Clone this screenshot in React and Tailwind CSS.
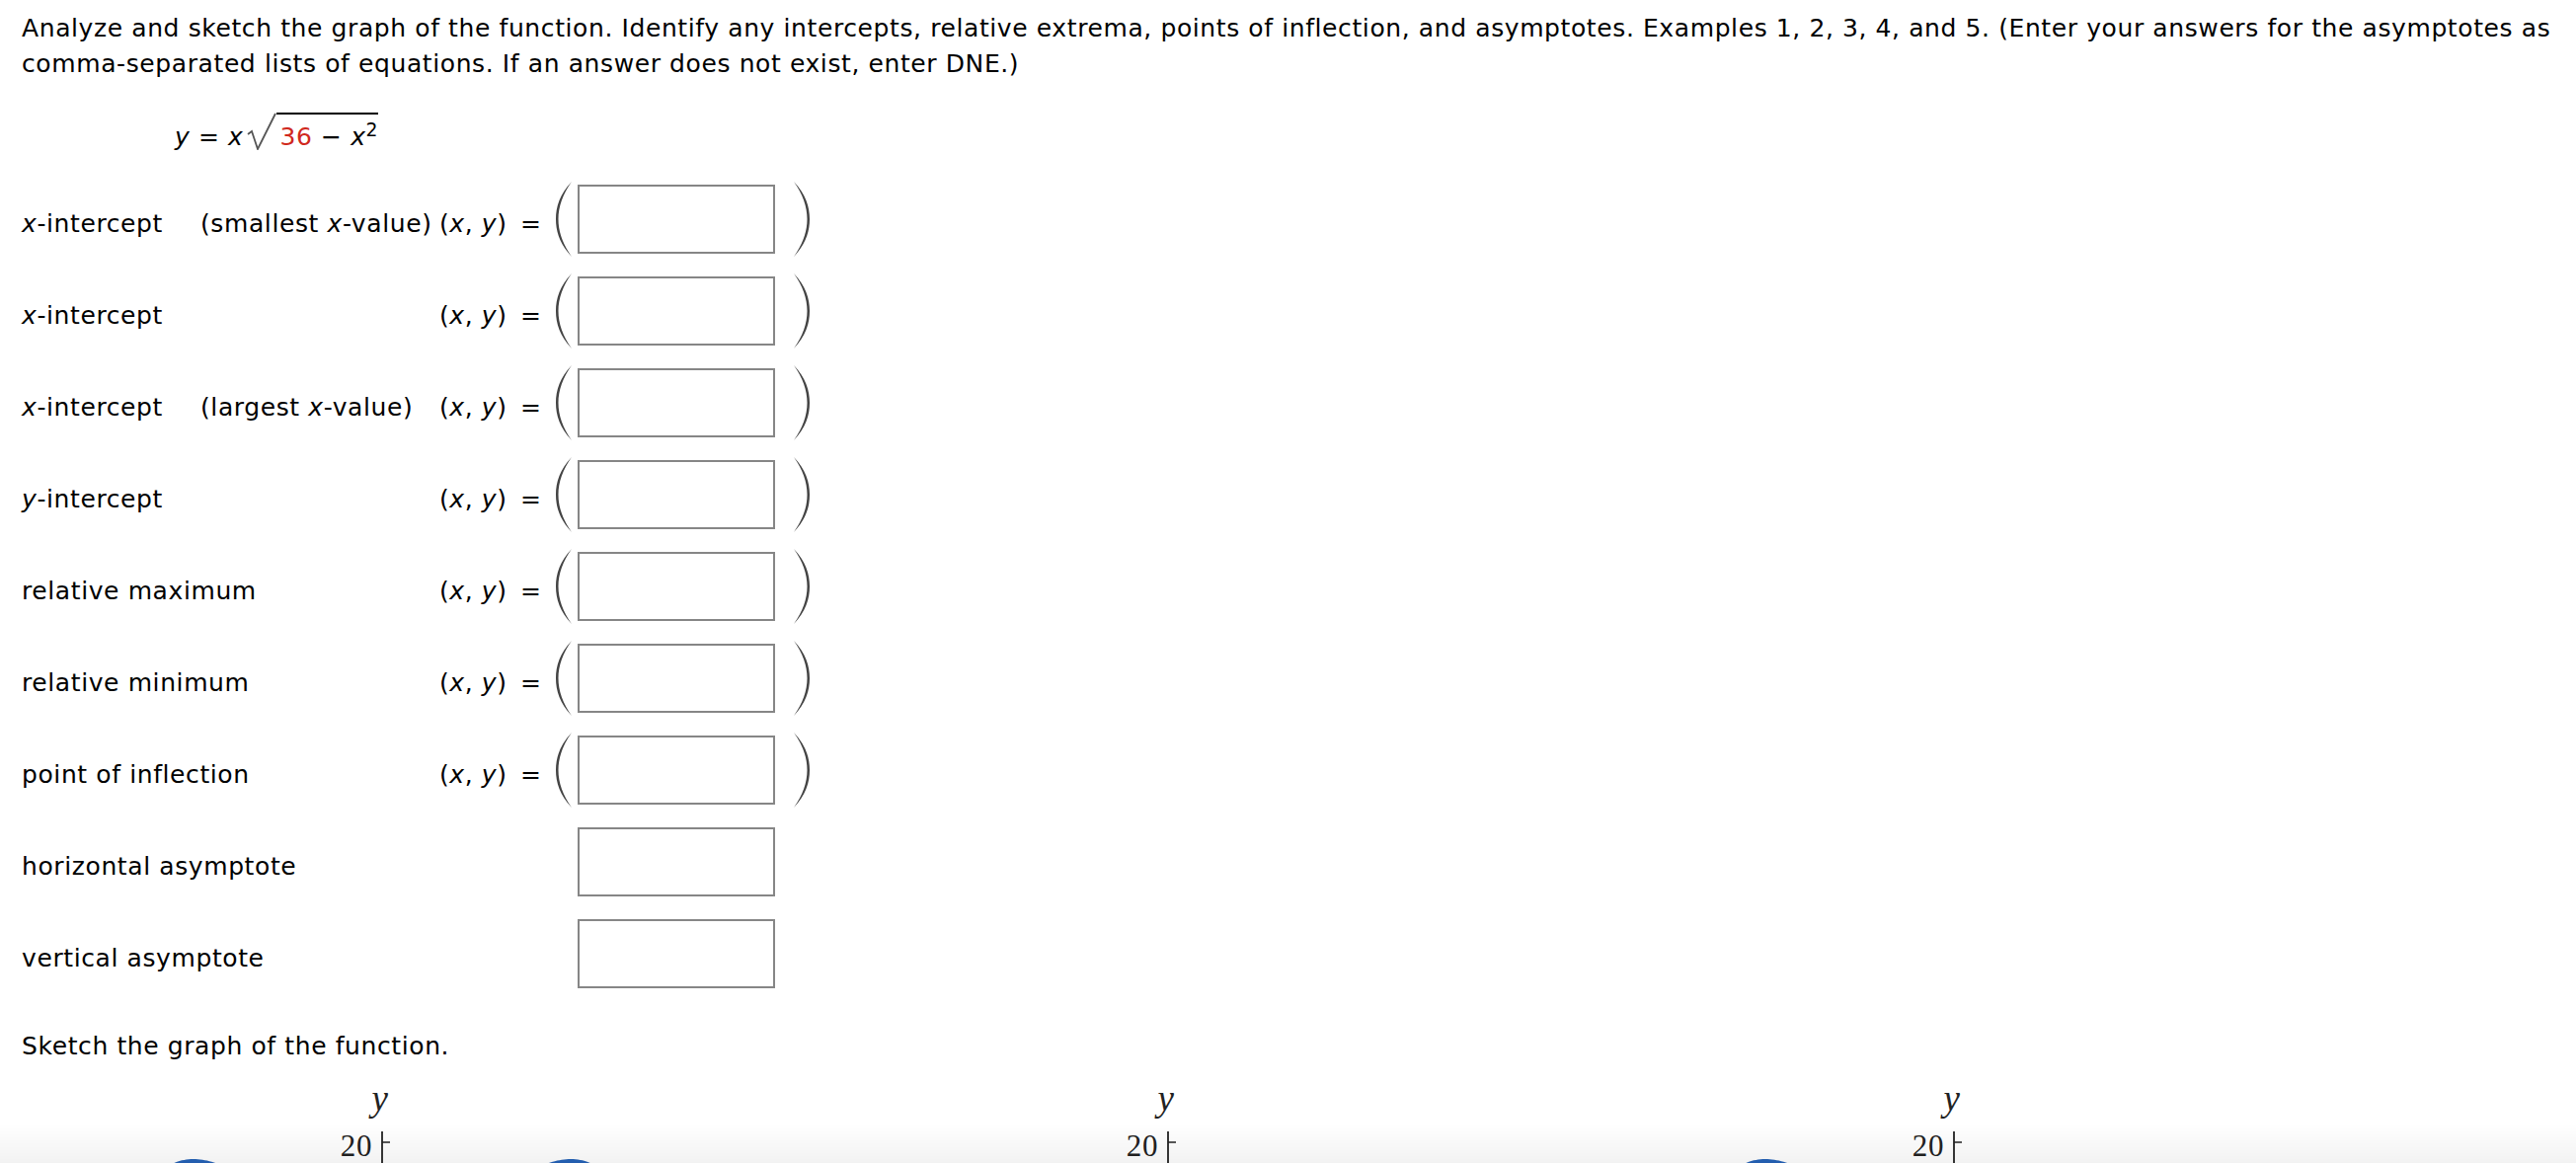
import React from 'react';

const Var = ({ children }) => <i className="italic">{children}</i>;

const Paren = ({ right = false, className = '' }) => (
    <svg width="20" height="78" viewBox="0 0 20 78" className={`shrink-0 ${className}`}>
        <path
            d={
                right
                    ? 'M1 1 C13 14 17 26 17 39 C17 52 13 64 1 77 C10 64 14.5 52 14.5 39 C14.5 26 10 14 1 1 Z'
                    : 'M19 1 C7 14 3 26 3 39 C3 52 7 64 19 77 C10 64 5.5 52 5.5 39 C5.5 26 10 14 19 1 Z'
            }
            fill="#444"
        />
    </svg>
);

const AnswerBox = ({ className = '' }) => (
    <div className={`h-[70px] w-[200px] shrink-0 border-2 border-[#868686] bg-white ${className}`} />
);

const Row = ({ label, qualifier, paren = true }) => (
    <div className="flex h-[70px] items-center whitespace-nowrap">
        <div className="w-[181px] shrink-0 pt-[10px]">{label}</div>
        <div className="w-[242px] shrink-0 pt-[10px]">{qualifier}</div>
        {paren ? (
            <>
                <div className="w-[82px] shrink-0 pt-[10px]">
                    (<Var>x</Var>, <Var>y</Var>)
                </div>
                <div className="w-[33px] shrink-0 pt-[10px]">=</div>
                <Paren />
                <AnswerBox className="ml-[5px]" />
                <Paren right className="ml-[18px]" />
            </>
        ) : (
            <AnswerBox className="ml-[140px]" />
        )}
    </div>
);

// little preview graphs, only the top of them shows in the window
const Graph = ({ fn }) => {
    const ox = 365;
    const toX = (x) => ox + x * 45;
    const toY = (y) => 67 + (20 - y) * 9.5;
    const pts = [];
    for (let i = 0; i <= 240; i++) {
        const x = -6 + (12 * i) / 240;
        pts.push(`${toX(x).toFixed(1)},${toY(fn(x)).toFixed(1)}`);
    }
    return (
        <svg width="796" height="480" viewBox="0 0 796 480" className="shrink-0 overflow-visible">
            <text x="363" y="35" textAnchor="middle" fontFamily="'Liberation Serif', serif" fontStyle="italic" fontSize="37" fill="#222">
                y
            </text>
            <text x="355" y="81" textAnchor="end" fontFamily="'Liberation Serif', serif" fontSize="31" fill="#222">
                20
            </text>
            <line x1={ox} y1="56" x2={ox} y2="470" stroke="#222" strokeWidth="1.8" />
            <line x1={ox} y1="67" x2={ox + 8} y2="67" stroke="#222" strokeWidth="1.5" />
            <line x1="40" y1={toY(0)} x2="760" y2={toY(0)} stroke="#222" strokeWidth="1.8" />
            <polyline points={pts.join(' ')} fill="none" stroke="#2563b8" strokeWidth="4" strokeLinecap="round" />
        </svg>
    );
};

const root = (x) => Math.sqrt(Math.max(0, 36 - x * x));

const App = () => {
    return (
        <div className="relative min-h-screen bg-white pl-[22px] pt-[11px] text-[25px] leading-[36px] tracking-[0.6px] text-black font-[Verdana,'DejaVu_Sans',sans-serif]">
            <p className="whitespace-nowrap">
                Analyze and sketch the graph of the function. Identify any intercepts, relative extrema, points of inflection, and asymptotes. Examples 1, 2, 3, 4, and 5. (Enter your answers for the asymptotes as
                <br />
                comma-separated lists of equations. If an answer does not exist, enter DNE.)
            </p>

            {/* formula */}
            <div className="mt-[31px] whitespace-nowrap pl-[155px]">
                <Var>y</Var> = <Var>x</Var>
                <svg width="30" height="38" viewBox="0 0 30 38" className="ml-[4px] inline-block align-[-5px]">
                    <path d="M1 22 L5 19 L11 37 L29 1" fill="none" stroke="#555" strokeWidth="1.8" />
                </svg>
                <span className="border-t-2 border-black pl-[3px] pt-[8px]">
                    <span className="text-[#d0281d]">36</span> − <Var>x</Var>
                    <sup>2</sup>
                </span>
            </div>

            <div className="mt-[30px] flex flex-col gap-[23px]">
                <Row
                    label={<><Var>x</Var>-intercept</>}
                    qualifier={<>(smallest <Var>x</Var>-value)</>}
                />
                <Row label={<><Var>x</Var>-intercept</>} />
                <Row
                    label={<><Var>x</Var>-intercept</>}
                    qualifier={<>(largest <Var>x</Var>-value)</>}
                />
                <Row label={<><Var>y</Var>-intercept</>} />
                <Row label="relative maximum" />
                <Row label="relative minimum" />
                <Row label="point of inflection" />
                <Row label="horizontal asymptote" paren={false} />
                <Row label="vertical asymptote" paren={false} />
            </div>

            <p className="mt-[41px]">Sketch the graph of the function.</p>

            <div className="mt-[12px] flex">
                <Graph fn={(x) => Math.abs(x) * root(x)} />
                <Graph fn={(x) => -Math.abs(x) * root(x)} />
                <Graph fn={(x) => -x * root(x)} />
            </div>

            <div className="pointer-events-none fixed inset-x-0 bottom-0 h-[40px] bg-linear-to-b from-transparent to-black/[0.05]" />
        </div>
    );
};

export default App;
